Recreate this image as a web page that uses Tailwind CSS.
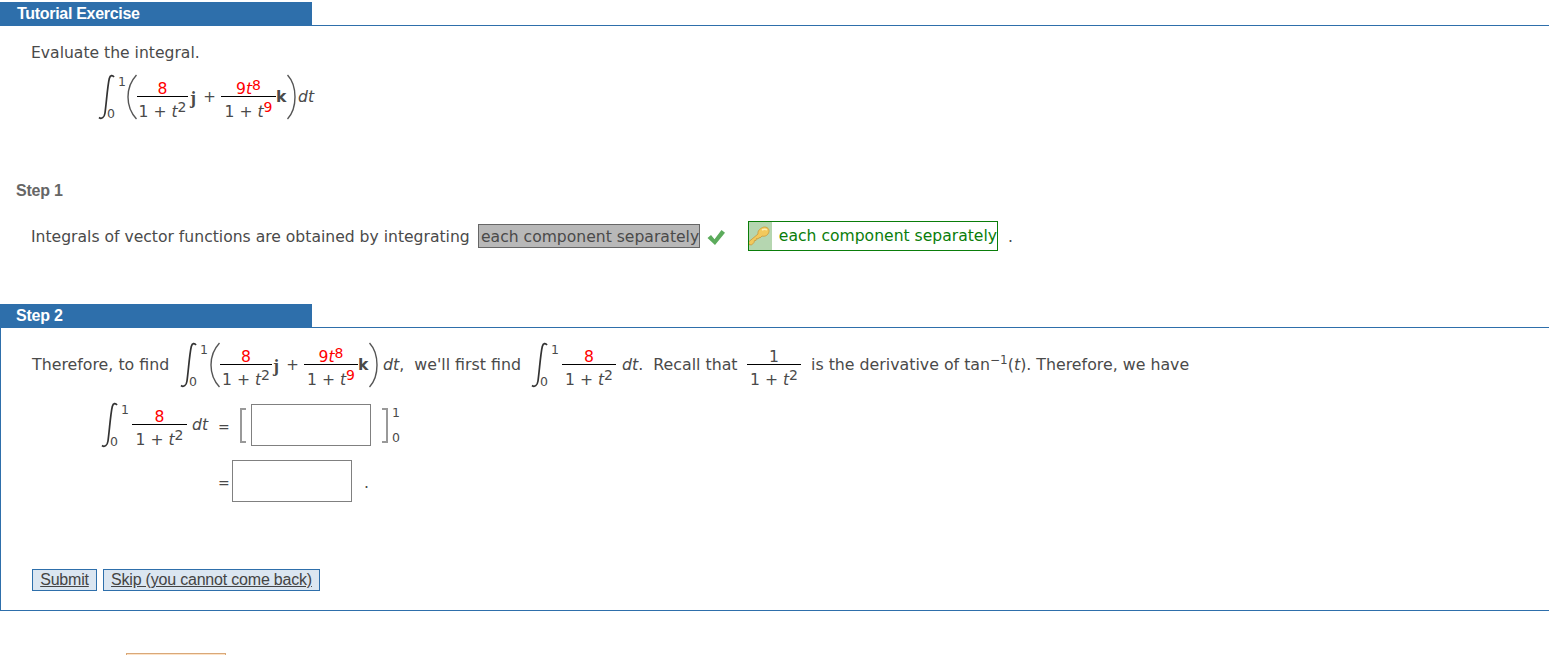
<!DOCTYPE html>
<html lang="en"><head>
<meta charset="UTF-8">
<script src="https://cdn.jsdelivr.net/npm/@tailwindcss/browser@4"></script>
</head>
<body class="bg-white overflow-hidden">
<div class="h-[655px] w-[1549px] overflow-hidden pt-[2px] font-['DejaVu_Sans',sans-serif] text-[15.6px] text-[#4a4a4a]">

  <!-- tutorial header -->
  <div class="h-[24px] border-b border-[#2e6fab]">
    <div class="w-[312px] h-[24px] bg-[#2e6fab] pl-[17px] font-['Liberation_Sans',sans-serif] text-[16px] tracking-[-0.3px] leading-[23px] font-bold text-white">Tutorial Exercise</div>
  </div>

  <div class="h-[278px]">
    <p class="pl-[31px] pt-[17px] leading-[20px]">Evaluate the integral.</p>

    <div class="ml-[98px] mt-[4px] flex items-center h-[60px] whitespace-nowrap">
      <div class="flex w-[29px] h-[46px] shrink-0">
        <svg class="w-[17px] h-[46px] shrink-0" viewBox="0 0 17 46"><path d="M16 3C14.500 .8 12.200 1 11.300 4.500 9.500 12 8.500 28 7 39c-.6 4.500-3.500 6.500-6 4.500" fill="none" stroke="#333" stroke-width="1.700"/></svg>
        <div class="flex flex-col justify-between text-[12.5px] leading-[13px] pt-[1px] -ml-[8px]"><span class="pl-[11px]">1</span><span>0</span></div>
      </div>
      <svg class="w-[10px] h-[46px] shrink-0" viewBox="0 0 10 46"><path d="M9.500 1C3 8 1 15 1 23s2 15 8.500 22" fill="none" stroke="#555" stroke-width="1.400"/></svg>
      <div class="flex flex-col items-center w-[51px]">
        <span class="w-full text-center border-b border-black pt-[8px] leading-[14px] text-[#f00]">8</span>
        <span class="pt-[7px] leading-[16px]">1 + <i>t</i><sup class="text-[14px] leading-none -top-[5px]">2</sup></span>
      </div>
      <b class="w-[13px] pl-[2px] mt-[3px] font-['Liberation_Serif',serif] text-[18px]">j</b>
      <span class="w-[17px] text-center text-[15px]">+</span>
      <div class="flex flex-col items-center w-[55px] ml-[3px]">
        <span class="w-full text-center border-b border-black pt-[8px] leading-[14px] text-[#f00]">9<i>t</i><sup class="text-[14px] leading-none -top-[4px]">8</sup></span>
        <span class="pt-[7px] leading-[16px]">1 + <i>t</i><sup class="text-[14px] leading-none -top-[5px] text-[#f00]">9</sup></span>
      </div>
      <b class="w-[11px] mt-[2px]">k</b>
      <svg class="w-[9px] h-[46px] shrink-0" viewBox="0 0 9 46"><path d="M.5 1C7 8 8 15 8 23S7 38 .5 45" fill="none" stroke="#555" stroke-width="1.400"/></svg>
      <i class="ml-[2px] mt-[2px]">dt</i>
    </div>

    <p class="pl-[16px] pt-[54px] font-['Liberation_Sans',sans-serif] text-[16px] tracking-[-0.2px] leading-[20px] font-bold text-[#666]">Step 1</p>

    <div class="pl-[31px] mt-[10px] flex items-center h-[50px] whitespace-nowrap">
      <span class="w-[447px] pt-[3px]">Integrals of vector functions are obtained by integrating</span>
      <span class="h-[24px] w-[222px] border border-[#666] bg-[#b8b8b8] leading-[25px] pl-[2px]">each component separately</span>
      <svg class="ml-[7px] w-[18px] h-[18px] mt-[2px] shrink-0" viewBox="0 0 18 18"><path d="M.5 10l3.500-3 3.500 4.200L14.500 2 18 4.800 8 17z" fill="#5cab5c"/></svg>
      <span class="ml-[23px] flex h-[30px] w-[250px] border border-[#0a7d0a] text-[#0a7d0a]">
        <span class="w-[23px] h-full bg-[#b5d6b0] flex items-center justify-center">
          <svg class="w-[22px] h-[22px] shrink-0" viewBox="0 0 22 22"><path d="M13.500 2.500c3-1.500 7 .5 6.500 4-.5 3.500-4 5.500-7 4.500l-2 2-1-.5-1 1.500-1.500-.5-.5 2-1.500 0-.5 2-2.500 2.500-2.500-.5-.5-2.500L9 9c-.5-3 1.500-5 4.500-6.500z" fill="#f2c95c" stroke="#c9983a" stroke-width=".8"/><path d="M13 5c2-1 3.500-1 5 0" fill="none" stroke="#fbeeb5" stroke-width="1.500"/></svg>
        </span>
        <span class="pl-[7px] leading-[29px]">each component separately</span>
      </span>
      <span class="ml-[10px] pt-[3px]">.</span>
    </div>
  </div>

  <!-- step 2 -->
  <div class="h-[24px] border-b border-[#2e6fab]">
    <div class="w-[312px] h-[24px] bg-[#2e6fab] pl-[16px] font-['Liberation_Sans',sans-serif] text-[16px] tracking-[-0.2px] leading-[23px] font-bold text-white">Step 2</div>
  </div>
  <div class="h-[283px] border-l border-b border-[#2e6fab]">
    <div class="pl-[31px] flex items-center h-[74px] whitespace-nowrap">
      <span class="w-[148px] text-[15.8px]">Therefore, to find</span>
      <div class="flex w-[30px] h-[46px] shrink-0">
        <svg class="w-[17px] h-[46px] shrink-0" viewBox="0 0 17 46"><path d="M16 3C14.500 .8 12.200 1 11.300 4.500 9.500 12 8.500 28 7 39c-.6 4.500-3.500 6.500-6 4.500" fill="none" stroke="#333" stroke-width="1.700"/></svg>
        <div class="flex flex-col justify-between text-[12.5px] leading-[13px] pt-[1px] -ml-[8px]"><span class="pl-[11px]">1</span><span>0</span></div>
      </div>
      <svg class="w-[10px] h-[46px] shrink-0" viewBox="0 0 10 46"><path d="M9.500 1C3 8 1 15 1 23s2 15 8.500 22" fill="none" stroke="#555" stroke-width="1.400"/></svg>
      <div class="flex flex-col items-center w-[52px]">
        <span class="w-full text-center border-b border-black pt-[8px] leading-[14px] text-[#f00]">8</span>
        <span class="pt-[7px] leading-[16px]">1 + <i>t</i><sup class="text-[14px] leading-none -top-[5px]">2</sup></span>
      </div>
      <b class="w-[12px] pl-[1px] mt-[3px] font-['Liberation_Serif',serif] text-[18px]">j</b>
      <span class="w-[17px] text-center text-[15px]">+</span>
      <div class="flex flex-col items-center w-[54px] ml-[3px]">
        <span class="w-full text-center border-b border-black pt-[8px] leading-[14px] text-[#f00]">9<i>t</i><sup class="text-[14px] leading-none -top-[4px]">8</sup></span>
        <span class="pt-[7px] leading-[16px]">1 + <i>t</i><sup class="text-[14px] leading-none -top-[5px] text-[#f00]">9</sup></span>
      </div>
      <b class="w-[11px] mt-[2px]">k</b>
      <svg class="w-[9px] h-[46px] shrink-0" viewBox="0 0 9 46"><path d="M.5 1C7 8 8 15 8 23S7 38 .5 45" fill="none" stroke="#555" stroke-width="1.400"/></svg>
      <span class="ml-[5px] w-[148px] text-[15.8px]"><i>dt</i>, &nbsp;we'll first find</span>
      <div class="flex w-[31px] h-[46px] shrink-0">
        <svg class="w-[17px] h-[46px] shrink-0" viewBox="0 0 17 46"><path d="M16 3C14.500 .8 12.200 1 11.300 4.500 9.500 12 8.500 28 7 39c-.6 4.500-3.500 6.500-6 4.500" fill="none" stroke="#333" stroke-width="1.700"/></svg>
        <div class="flex flex-col justify-between text-[12.5px] leading-[13px] pt-[1px] -ml-[8px]"><span class="pl-[11px]">1</span><span>0</span></div>
      </div>
      <div class="flex flex-col items-center w-[54px]">
        <span class="w-full text-center border-b border-black pt-[8px] leading-[14px] text-[#f00]">8</span>
        <span class="pt-[7px] leading-[16px]">1 + <i>t</i><sup class="text-[14px] leading-none -top-[5px]">2</sup></span>
      </div>
      <span class="ml-[6px] w-[125px] text-[15.8px]"><i>dt</i>. &nbsp;Recall that</span>
      <div class="flex flex-col items-center w-[54px]">
        <span class="w-full text-center border-b border-black pt-[8px] leading-[14px]">1</span>
        <span class="pt-[7px] leading-[16px]">1 + <i>t</i><sup class="text-[14px] leading-none -top-[5px]">2</sup></span>
      </div>
      <span class="ml-[10px] text-[15.8px]">is the derivative of tan<sup class="text-[12px] leading-none">−1</sup>(<i>t</i>). Therefore, we have</span>
    </div>

    <div class="pl-[100px] flex items-center h-[46px] whitespace-nowrap">
      <div class="flex w-[31px] h-[46px] shrink-0">
        <svg class="w-[17px] h-[46px] shrink-0" viewBox="0 0 17 46"><path d="M16 3C14.500 .8 12.200 1 11.300 4.500 9.500 12 8.500 28 7 39c-.6 4.500-3.500 6.500-6 4.500" fill="none" stroke="#333" stroke-width="1.700"/></svg>
        <div class="flex flex-col justify-between text-[12.5px] leading-[13px] pt-[1px] -ml-[8px]"><span class="pl-[11px]">1</span><span>0</span></div>
      </div>
      <div class="flex flex-col items-center w-[55px]">
        <span class="w-full text-center border-b border-black pt-[8px] leading-[14px] text-[#f00]">8</span>
        <span class="pt-[7px] leading-[16px]">1 + <i>t</i><sup class="text-[14px] leading-none -top-[5px]">2</sup></span>
      </div>
      <i class="ml-[5px] w-[26px] mt-[2px]">dt</i>
      <span class="w-[22px] text-[14px] pt-[4px]">=</span>
      <span class="w-[6px] h-[35px] border-l-2 border-y-2 border-[#999]"></span>
      <span class="ml-[5px] w-[120px] h-[42px] border border-[#808080] bg-white"></span>
      <span class="ml-[11px] w-[6px] h-[35px] border-r-2 border-y-2 border-[#999]"></span>
      <div class="flex flex-col justify-between h-[38px] text-[12.5px] leading-[13px] ml-[4px]"><span>1</span><span>0</span></div>
    </div>

    <div class="pl-[217px] mt-[12px] flex items-center h-[42px]">
      <span class="w-[14px] text-[14px] pt-[4px]">=</span>
      <span class="w-[120px] h-[42px] border border-[#808080] bg-white"></span>
      <span class="ml-[12px] pt-[6px]">.</span>
    </div>

    <div class="pl-[31px] mt-[67px] flex gap-[6px] font-['Liberation_Sans',sans-serif] text-[16px] tracking-[-0.2px]">
      <button class="h-[22px] w-[65px] leading-[20px] border border-[#2e6fab] bg-[#dbe6f1] underline text-[#444]">Submit</button>
      <button class="h-[22px] w-[217px] leading-[20px] border border-[#2e6fab] bg-[#dbe6f1] underline text-[#444]">Skip (you cannot come back)</button>
    </div>
  </div>

  <div class="ml-[126px] mt-[42px] w-[100px] h-[10px] bg-[#fde3c8] border border-[#d9a878]"></div>
</div>
</body></html>
